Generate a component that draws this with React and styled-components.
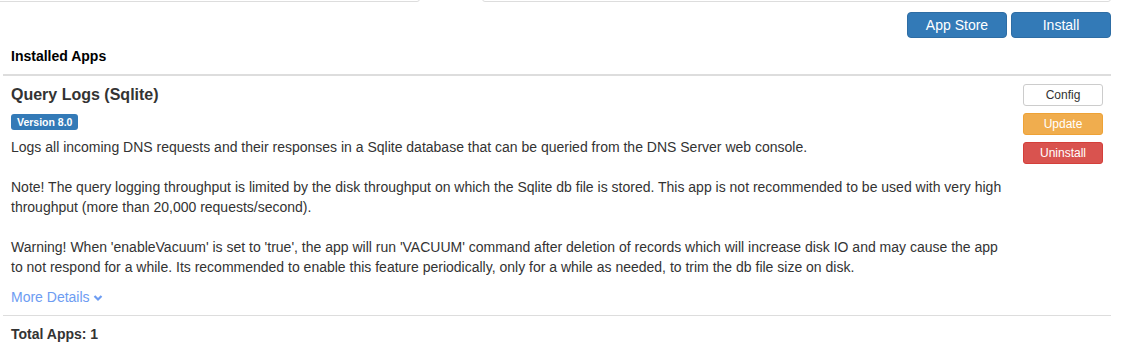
import React from 'react';
import styled, { createGlobalStyle } from 'styled-components';

const GlobalStyle = createGlobalStyle`
  html, body {
    margin: 0;
    padding: 0;
    background: #fff;
  }
  body {
    font-family: "Liberation Sans", Arial, Helvetica, sans-serif;
    font-size: 14px;
    line-height: 20px;
    color: #333;
  }
  * {
    box-sizing: border-box;
  }
`;

const app = {
  name: 'Query Logs (Sqlite)',
  version: '8.0',
  description: [
    'Logs all incoming DNS requests and their responses in a Sqlite database that can be queried from the DNS Server web console.',
    '',
    'Note! The query logging throughput is limited by the disk throughput on which the Sqlite db file is stored. This app is not recommended to be used with very high throughput (more than 20,000 requests/second).',
    '',
    "Warning! When 'enableVacuum' is set to 'true', the app will run 'VACUUM' command after deletion of records which will increase disk IO and may cause the app to not respond for a while. Its recommended to enable this feature periodically, only for a while as needed, to trim the db file size on disk.",
  ],
};

const App = () => (
  <>
    <GlobalStyle />
    <Page>
      <TabStrip>
        <TabEdge side="left" />
        <TabGap />
        <TabEdge side="right" />
      </TabStrip>
      <Toolbar>
        <TopButton>App Store</TopButton>
        <TopButton>Install</TopButton>
      </Toolbar>
      <AppsTable>
        <thead>
          <tr>
            <HeadCell colSpan={2}>Installed Apps</HeadCell>
          </tr>
        </thead>
        <tbody>
          <tr>
            <InfoCell>
              <AppTitle>{app.name}</AppTitle>
              <BadgeRow>
                <VersionBadge>{`Version ${app.version}`}</VersionBadge>
              </BadgeRow>
              <Description>
                {app.description.map((line, i) => (
                  <DescLine key={i}>{line || '\u00a0'}</DescLine>
                ))}
              </Description>
              <MoreLink href="#">
                More Details
                <svg width="10" height="8" viewBox="0 0 10 8">
                  <polyline
                    points="1.5,2 5,5.5 8.5,2"
                    fill="none"
                    stroke="currentColor"
                    strokeWidth="2.2"
                  />
                </svg>
              </MoreLink>
            </InfoCell>
            <ActionCell>
              <ActionButton variant="default">Config</ActionButton>
              <ActionButton variant="warning">Update</ActionButton>
              <ActionButton variant="danger">Uninstall</ActionButton>
            </ActionCell>
          </tr>
        </tbody>
        <tfoot>
          <tr>
            <FootCell colSpan={2}>Total Apps: 1</FootCell>
          </tr>
        </tfoot>
      </AppsTable>
    </Page>
  </>
);

const Page = styled.div`
  width: 1111px;
  padding-left: 3px;
`;

const TabStrip = styled.div`
  display: flex;
  height: 2px;
  overflow: hidden;
  margin-left: -3px;
`;

const TabEdge = styled.div`
  height: 6px;
  margin-top: -4px;
  border: 1px solid #ddd;
  border-radius: 4px;
  ${(p) => (p.side === 'left' ? 'width: 427px; margin-left: -7px;' : 'flex: 1;')}
`;

const TabGap = styled.div`
  width: 62px;
`;

const Toolbar = styled.div`
  display: flex;
  justify-content: flex-end;
  gap: 4px;
  margin-top: 10px;
`;

const TopButton = styled.button`
  width: 100px;
  height: 26px;
  padding: 0;
  font-family: inherit;
  font-size: 14px;
  color: #fff;
  background: #337ab7;
  border: 1px solid #2e6da4;
  border-radius: 4px;
  cursor: pointer;
`;

const AppsTable = styled.table`
  width: 100%;
  border-collapse: collapse;
  border-spacing: 0;
`;

const HeadCell = styled.th`
  padding: 8px;
  text-align: left;
  font-weight: bold;
  color: #000;
  border-bottom: 2px solid #ddd;
  line-height: 20px;
`;

const InfoCell = styled.td`
  padding: 8px;
  vertical-align: top;
`;

const ActionCell = styled.td`
  width: 96px;
  padding: 8px;
  vertical-align: top;
`;

const AppTitle = styled.div`
  font-size: 16px;
  font-weight: bold;
  line-height: 22px;
`;

const BadgeRow = styled.div`
  margin-top: 5px;
  height: 16px;
`;

const VersionBadge = styled.span`
  display: inline-block;
  height: 16px;
  padding: 0 6px;
  font-size: 10.5px;
  font-weight: bold;
  line-height: 16px;
  color: #fff;
  background: #337ab7;
  border-radius: 3px;
`;

const Description = styled.div`
  margin-top: 10px;
`;

const DescLine = styled.div`
  line-height: 20px;
`;

const MoreLink = styled.a`
  display: inline-flex;
  align-items: center;
  gap: 3px;
  margin-top: 10px;
  color: #6d9cf2;
  text-decoration: none;
  line-height: 20px;

  svg {
    margin-top: 2px;
  }
`;

const buttonColors = {
  default: 'color: #333; background: #fff; border-color: #ccc;',
  warning: 'color: #fff; background: #f0ad4e; border-color: #eea236;',
  danger: 'color: #fff; background: #d9534f; border-color: #d43f3a;',
};

const ActionButton = styled.button`
  display: block;
  width: 80px;
  height: 22px;
  padding: 0;
  margin: 0 0 7px;
  font-family: inherit;
  font-size: 12px;
  border: 1px solid;
  border-radius: 3px;
  cursor: pointer;
  ${(p) => buttonColors[p.variant]}
`;

const FootCell = styled.td`
  padding: 8px;
  font-weight: bold;
  border-top: 1px solid #ddd;
  line-height: 20px;
`;

export default App;
